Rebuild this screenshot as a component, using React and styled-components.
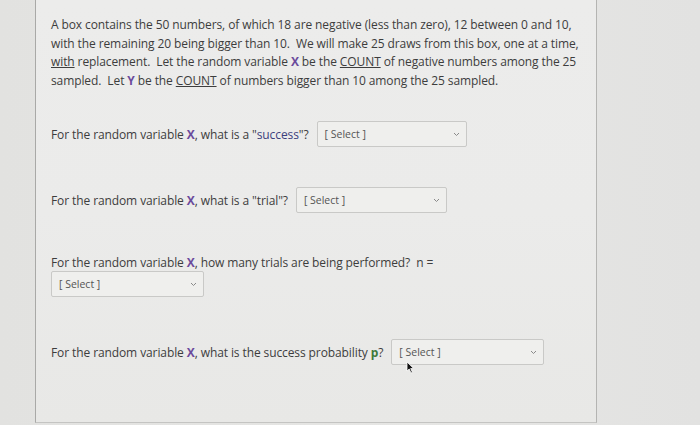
import React from "react";
import styled, { createGlobalStyle } from "styled-components";

const GlobalStyle = createGlobalStyle`
  html, body {
    margin: 0;
    padding: 0;
    background: #e3e3e1;
  }
  body {
    font-family: "Open Sans", "Noto Sans", sans-serif;
    color: #3d3d3d;
  }
`;

const Page = styled.div`
  width: 700px;
  height: 425px;
  overflow: hidden;
  background: linear-gradient(90deg, #e2e2e0 0%, #e6e6e4 60%, #e2e2e1 100%);
`;

const Panel = styled.div`
  box-sizing: border-box;
  margin-left: 35px;
  width: 562px;
  height: 423px;
  padding: 16px 0 0 15px;
  background: linear-gradient(180deg, #ececeb 0%, #ebebea 50%, #e8e8e6 100%);
  border-left: 1px solid #a9a9a7;
  border-right: 1px solid #b4b4b2;
  border-bottom: 1px solid #c4c4c2;
  position: relative;
`;

const Intro = styled.p`
  margin: 0;
  font-size: 12px;
  line-height: 18.5px;
  letter-spacing: -0.1px;
  width: 540px;
`;

const Under = styled.span`
  text-decoration: underline;
  text-underline-offset: 1px;
`;

const Var = styled.b`
  color: ${(p) => p.$color || "#6a4a9c"};
  font-weight: 700;
`;

const Quoted = styled.span`
  color: #3c3f7c;
`;

const Row = styled.div`
  display: flex;
  align-items: center;
  gap: 8px;
  margin-top: ${(p) => p.$top}px;
  font-size: 12px;
  letter-spacing: -0.1px;
`;

const Block = styled.div`
  margin-top: ${(p) => p.$top}px;
  font-size: 12px;
  letter-spacing: -0.1px;
  line-height: 17px;
`;

const SelectBox = styled.div`
  box-sizing: border-box;
  position: relative;
  width: ${(p) => p.$w}px;
  height: 26px;
  border: 1px solid #c9c9c7;
  border-radius: 2px;
  background: #efefed;
  display: flex;
  align-items: center;
  padding-left: 7px;
  font-size: 10.5px;
  color: #555;
  letter-spacing: 0;
`;

const Chevron = styled.svg`
  position: absolute;
  right: 6px;
  top: 10px;
`;

const Cursor = styled.svg`
  position: absolute;
  left: 370px;
  top: 361px;
`;

const Select = ({ w }) => (
  <SelectBox $w={w}>
    [ Select ]
    <Chevron width="7" height="5" viewBox="0 0 7 5">
      <path d="M1 1 L3.5 3.5 L6 1" fill="none" stroke="#8a8a8a" strokeWidth="1" />
    </Chevron>
  </SelectBox>
);

export default function App() {
  return (
    <Page>
      <GlobalStyle />
      <Panel>
        <Intro>
          A box contains the 50 numbers, of which 18 are negative (less than zero), 12 between 0 and 10,
          with the remaining 20 being bigger than 10.&nbsp; We will make 25 draws from this box, one at a time,{" "}
          <Under>with</Under> replacement.&nbsp; Let the random variable <Var>X</Var> be the <Under>COUNT</Under> of
          negative numbers among the 25 sampled.&nbsp; Let <Var>Y</Var> be the <Under>COUNT</Under> of numbers bigger
          than 10 among the 25 sampled.
        </Intro>

        <Row $top={31}>
          <span>
            For the random variable <Var>X</Var>, what is a "<Quoted>success</Quoted>"?
          </span>
          <Select w={150} />
        </Row>

        <Row $top={40}>
          <span>
            For the random variable <Var>X</Var>, what is a "trial"?
          </span>
          <Select w={151} />
        </Row>

        <Block $top={41}>
          <div>
            For the random variable <Var>X</Var>, how many trials are being performed?&nbsp; n =
          </div>
          <Select w={153} />
        </Block>

        <Row $top={42}>
          <span>
            For the random variable <Var>X</Var>, what is the success probability <Var $color="#3d7a3a">p</Var>?
          </span>
          <Select w={153} />
        </Row>

        <Cursor width="9" height="13" viewBox="0 0 9 13">
          <path d="M1 1 L1 10 L3.2 8 L5 12 L6.4 11.3 L4.7 7.5 L7.6 7.4 Z" fill="#111" stroke="#fff" strokeWidth="0.8" />
        </Cursor>
      </Panel>
    </Page>
  );
}
